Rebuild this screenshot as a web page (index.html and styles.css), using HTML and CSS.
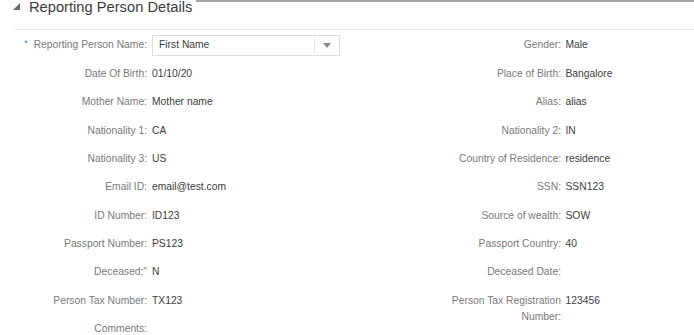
FILE: index.html
```html
<!DOCTYPE html>
<html>
<head>
<meta charset="utf-8">
<link rel="stylesheet" href="styles.css">
</head>
<body>
<div class="page">
  <div class="hdr">
    <div class="hdr-title">
      <svg class="disc" width="7" height="7" viewBox="0 0 7 7"><polygon points="7,0 7,7 0,7" fill="#6b6b6b"/></svg>
      <h1 class="title">Reporting Person Details</h1>
    </div>
    <div class="hdr-rule"></div>
  </div>
  <div class="form">
    <div class="col col-left">
      <div class="row row-select">
        <div class="lbl"><span class="req">*</span>Reporting Person Name:</div>
        <div class="val">
          <div class="select">
            <span class="select-text">First Name</span>
            <span class="select-btn"><svg width="8" height="5" viewBox="0 0 8 5"><polygon points="0,0 8,0 4,5" fill="#8a8a8a"/></svg></span>
          </div>
        </div>
      </div>
      <div class="row"><div class="lbl">Date Of Birth:</div><div class="val">01/10/20</div></div>
      <div class="row"><div class="lbl">Mother Name:</div><div class="val">Mother name</div></div>
      <div class="row"><div class="lbl">Nationality 1:</div><div class="val">CA</div></div>
      <div class="row"><div class="lbl">Nationality 3:</div><div class="val">US</div></div>
      <div class="row"><div class="lbl">Email ID:</div><div class="val">email@test.com</div></div>
      <div class="row"><div class="lbl">ID Number:</div><div class="val">ID123</div></div>
      <div class="row"><div class="lbl">Passport Number:</div><div class="val">PS123</div></div>
      <div class="row"><div class="lbl">Deceased:"</div><div class="val">N</div></div>
      <div class="row"><div class="lbl">Person Tax Number:</div><div class="val">TX123</div></div>
      <div class="row"><div class="lbl">Comments:</div><div class="val"></div></div>
    </div>
    <div class="col col-right">
      <div class="row row-select"><div class="lbl">Gender:</div><div class="val">Male</div></div>
      <div class="row"><div class="lbl">Place of Birth:</div><div class="val">Bangalore</div></div>
      <div class="row"><div class="lbl">Alias:</div><div class="val">alias</div></div>
      <div class="row"><div class="lbl">Nationality 2:</div><div class="val">IN</div></div>
      <div class="row"><div class="lbl">Country of Residence:</div><div class="val">residence</div></div>
      <div class="row"><div class="lbl">SSN:</div><div class="val">SSN123</div></div>
      <div class="row"><div class="lbl">Source of wealth:</div><div class="val">SOW</div></div>
      <div class="row"><div class="lbl">Passport Country:</div><div class="val">40</div></div>
      <div class="row"><div class="lbl">Deceased Date:</div><div class="val"></div></div>
      <div class="row"><div class="lbl">Person Tax Registration Number:</div><div class="val">123456</div></div>
    </div>
  </div>
</div>
</body>
</html>
```
FILE: styles.css
```css
html, body {
  margin: 0;
  padding: 0;
  background: #ffffff;
}
body {
  font-family: "Liberation Sans", Arial, sans-serif;
  width: 694px;
  height: 335px;
  overflow: hidden;
}
.page {
  display: flex;
  flex-direction: column;
}
.hdr {
  display: flex;
  margin-left: 14px;
  height: 29px;
  border-bottom: 1px solid #ececec;
  box-sizing: content-box;
}
.hdr-title {
  display: flex;
  align-items: flex-start;
  gap: 9px;
  padding-right: 4px;
}
.disc {
  margin-top: 3px;
  margin-left: -1px;
  display: block;
}
.title {
  margin: 0;
  font-size: 14.7px;
  line-height: 15px;
  font-weight: normal;
  color: #3c3c3c;
  white-space: nowrap;
}
.hdr-rule {
  flex: 1;
  border-top: 2px solid #a6a6a6;
  height: 0;
}
.form {
  display: flex;
  padding-left: 14px;
  padding-top: 1px;
}
.col {
  display: flex;
  flex-direction: column;
}
.col-left {
  width: 438px;
}
.col-right {
  flex: 1;
}
.row {
  display: flex;
  align-items: flex-start;
  height: 28.35px;
  box-sizing: border-box;
  padding-top: 6.5px;
  font-size: 10.3px;
  line-height: 16px;
}
.row-select {
  align-items: center;
  padding-top: 0;
}
.lbl {
  color: #7a7a7a;
  text-align: right;
  flex: none;
}
.col-left .lbl {
  width: 133px;
}
.col-right .lbl {
  width: 109px;
}
.col-right .row:last-child .lbl {
  margin-left: -2px;
  width: 111px;
}
.val {
  color: #3d3d3d;
  padding-left: 5px;
  white-space: nowrap;
}
.col-right .val {
  padding-left: 4.5px;
}
.req {
  color: #2f7bbd;
  font-size: 9px;
  margin-right: 6px;
  position: relative;
  top: -2px;
}
.select {
  display: flex;
  align-items: center;
  width: 188px;
  height: 21px;
  box-sizing: border-box;
  border: 1px solid #dcdcdc;
  background: #ffffff;
}
.select-text {
  flex: 1;
  padding-left: 6px;
  color: #3d3d3d;
  font-size: 10.3px;
}
.select-btn {
  display: flex;
  align-items: center;
  justify-content: center;
  width: 24px;
  height: 15px;
  border-left: 1px solid #e6e6e6;
}
.select-btn svg {
  display: block;
}
```
